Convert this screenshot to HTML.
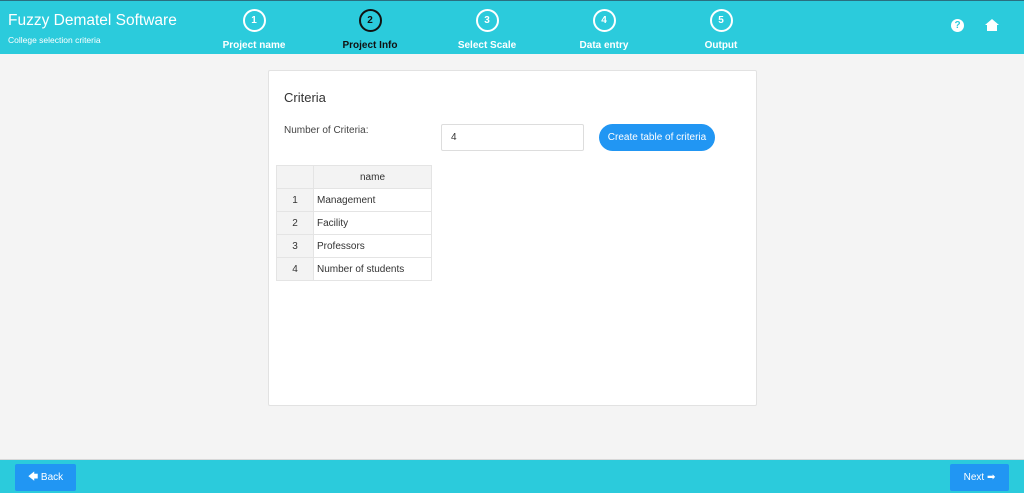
<!DOCTYPE html>
<html><head><style>
*{box-sizing:border-box;margin:0;padding:0}
body{width:1024px;height:493px;background:#f4f4f4;font-family:"Liberation Sans",Arial,sans-serif;position:relative;overflow:hidden}
.hdr{position:absolute;left:0;top:0;width:1024px;height:54px;background:#2bcbdc;border-top:1px solid #2a6f80}
.title{position:absolute;left:8px;top:11px;color:#fff;font-size:15.5px}
.sub{position:absolute;left:8px;top:34px;color:#fff;font-size:8.5px}
.step{position:absolute;top:8px;width:120px;margin-left:-60px;text-align:center;color:#fff}
.circ{width:23px;height:23px;border:2px solid #fff;border-radius:50%;margin:0 auto;font-size:10px;font-weight:bold;line-height:19px}
.lbl{font-size:10px;font-weight:bold;margin-top:8px}
.act{color:#111}.act .circ{border-color:#111}
.card{position:absolute;left:268px;top:70px;width:489px;height:336px;background:#fff;border:1px solid #e2e2e2;border-radius:2px}
.ftr{position:absolute;left:0;top:459px;width:1024px;height:34px;background:#2bcbdc;border-top:1px solid #d8d8d8}
.btn{position:absolute;top:4px;height:27px;background:#2196f3;color:#fff;font-size:10px;line-height:27px;text-align:center;border-radius:2px}
table{position:absolute;left:7px;top:94px;border-collapse:collapse;font-size:10px;color:#333}
td{border:1px solid #e4e4e4;height:23px;padding:0 3px}
td.n{background:#f3f3f3;width:37px;text-align:center}
</style></head><body>
<div class="hdr">
<div class="title">Fuzzy Dematel Software</div>
<div class="sub">College selection criteria</div>
<div class="step" style="left:254px"><div class="circ">1</div><div class="lbl">Project name</div></div>
<div class="step act" style="left:370px"><div class="circ">2</div><div class="lbl">Project Info</div></div>
<div class="step" style="left:487px"><div class="circ">3</div><div class="lbl">Select Scale</div></div>
<div class="step" style="left:604px"><div class="circ">4</div><div class="lbl">Data entry</div></div>
<div class="step" style="left:721px"><div class="circ">5</div><div class="lbl">Output</div></div>
<div style="position:absolute;left:951px;top:18px;width:13px;height:13px;border-radius:50%;background:#fff;color:#2bcbdc;font-size:10px;font-weight:bold;text-align:center;line-height:13px">?</div>
<svg style="position:absolute;left:985px;top:18px" width="14" height="12" viewBox="0 0 14 12"><path d="M7 0L0 6h2v6h10V6h2z" fill="#fff"/></svg>
</div>
<div class="card">
<div style="position:absolute;left:15px;top:19px;font-size:13px;color:#333">Criteria</div>
<div style="position:absolute;left:15px;top:54px;font-size:10px;color:#444">Number of Criteria:</div>
<div style="position:absolute;left:172px;top:53px;width:143px;height:27px;border:1px solid #ddd;border-radius:2px;font-size:10px;line-height:25px;padding-left:9px;color:#333">4</div>
<div style="position:absolute;left:330px;top:53px;width:116px;height:27px;background:#2196f3;border-radius:14px;color:#fff;font-size:10px;line-height:27px;text-align:center">Create table of criteria</div>
<table>
<tr><td class="n"></td><td style="background:#f3f3f3;width:118px;text-align:center">name</td></tr>
<tr><td class="n">1</td><td>Management</td></tr>
<tr><td class="n">2</td><td>Facility</td></tr>
<tr><td class="n">3</td><td>Professors</td></tr>
<tr><td class="n">4</td><td>Number of students</td></tr>
</table>
</div>
<div class="ftr">
<div class="btn" style="left:15px;width:61px">&#129092; Back</div>
<div class="btn" style="left:950px;width:59px">Next &#10145;</div>
</div>
</body></html>
